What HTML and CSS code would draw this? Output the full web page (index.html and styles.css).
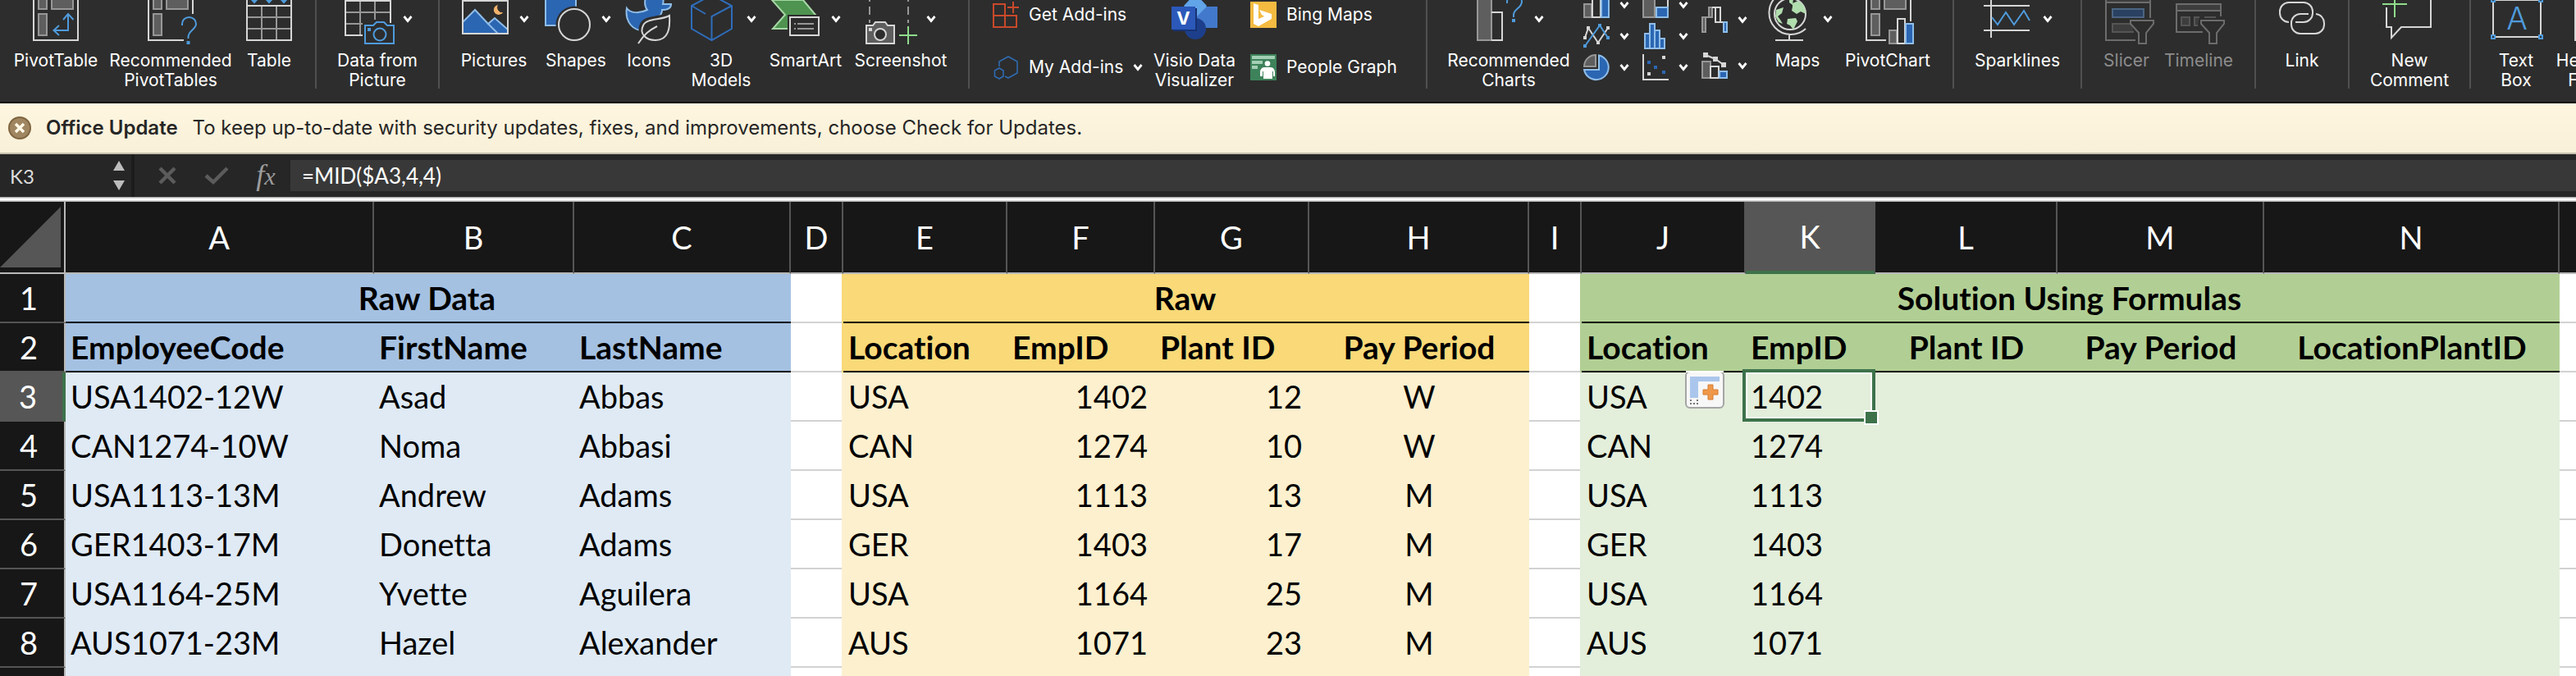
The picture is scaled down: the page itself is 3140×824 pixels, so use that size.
FILE: index.html
```html
<!DOCTYPE html>
<html lang="en">
<head>
<meta charset="utf-8">
<title>Workbook</title>
<link rel="stylesheet" href="styles.css">
</head>
<body>
<svg class="defs" aria-hidden="true">
  <symbol id="chev" viewBox="0 0 12 10"><path d="M1.5 2 L6 7.5 L10.5 2" fill="none" stroke="#fff" stroke-width="2.8"/></symbol>
</svg>
<div class="app">
  <div class="ribbon" role="toolbar" aria-label="Insert">
    <div class="group g-tables">
      <button class="tool"><span class="pic">
        <svg class="icon" viewBox="0 0 64 54"><path class="w" d="M5 -4V49H59V-4"/><path class="g" d="M11 -4V11H21V-4M27 -4V11H53V-4M11 17H21V43H11Z"/><path class="b" d="M47 18V37H30M41 24L47 17L53.5 24M36 31L29.500 37L36 43"/></svg></span>
        <span>PivotTable</span></button>
      <button class="tool"><span class="pic">
        <svg class="icon" viewBox="0 0 64 54"><path class="w" d="M59 17V-4M5 -4V49H48"/><path class="g" d="M11 -4V11H21V-4M27 -4V11H53V-4M11 17H21V43H11Z"/><path class="b" d="M46 31V29A8.500 8 0 0 1 63 29C63 36 53.500 37 53.500 45V47"/><path class="bf" d="M51.500 50h4v4h-4z"/></svg></span>
        <span>Recommended<br>PivotTables</span></button>
      <button class="tool"><span class="pic">
        <svg class="icon" viewBox="0 0 64 54"><path class="gl" d="M23 8V48M41 8V48M5 21H59M5 35H59"/><path class="w" d="M5 -4V49H59V-4M5 7H59"/><path class="bf" d="M9 -1H19L14 4.500ZM27 -1H37L32 4.500ZM45 -1H55L50 4.500Z"/></svg></span>
        <span>Table</span></button>
    </div>
    <div class="group g-single g-data">
      <button class="tool"><span class="pic">
        <svg class="icon" viewBox="0 0 64 54"><path class="gl" d="M22 2V42M40 2V24M4 15H58M4 29H25"/><path class="w" d="M59 28V1H4V43H25"/><path class="b" d="M28 31H38L42 27H51L55 31H63V53H28Z"/><circle class="b" cx="46" cy="42" r="7.500"/><path class="bf" d="M31 34h4v4h-4z"/></svg>
        <svg class="chev"><use href="#chev"/></svg></span>
        <span>Data from<br>Picture</span></button>
    </div>
    <div class="group g-illus">
      <button class="tool"><span class="pic">
        <svg class="icon" viewBox="0 0 64 54"><path class="bb" d="M5 27L20 12L36 29L44 22L60 36V41H5Z"/><path d="M36 29L48 41" fill="none" stroke="#8fbde8" stroke-width="2"/><path class="w" d="M5 1H60V41H5Z"/><path d="M48 6a6 6 0 1 0 6 9a6 6 0 0 1-6-9z" fill="#f2b26b"/></svg>
        <svg class="chev"><use href="#chev"/></svg></span>
        <span>Pictures</span></button>
      <button class="tool"><span class="pic">
        <svg class="icon" viewBox="0 0 64 54"><path class="bb" d="M6 -4H43V31H6Z"/><circle cx="41" cy="30" r="22.500" fill="#2d2d2d"/><circle class="w" cx="41" cy="30" r="19"/></svg>
        <svg class="chev"><use href="#chev"/></svg></span>
        <span>Shapes</span></button>
      <button class="tool"><span class="pic">
        <svg class="icon" viewBox="0 0 64 54"><path class="bb" d="M5 10C9 16 20 17 30 12C26 7 26 -2 31 -7H46C50 -4 50 2 49 5H59C59 10 54 12 48 12C48 16 46 19 43 21C30 22 23 30 21 37C8 34 3 22 5 10Z"/><path d="M57 18C58 34 56 49 40 49C28 49 20 41 24 31C28 21 44 25 57 18Z" fill="#2d2d2d" stroke="#2d2d2d" stroke-width="7"/><path class="w" d="M57 19C58 34 56 49 40 49C28 49 20 41 25 31C29 22 46 25 57 19ZM42 32C32 37 26 42 19 53"/></svg></span>
        <span>Icons</span></button>
      <button class="tool"><span class="pic">
        <svg class="icon" viewBox="0 0 64 54"><path d="M7 7L31.500 -6L56 7V35L31.500 49L7 35ZM7 7L24 17M56 7L31.500 20V49" fill="none" stroke="#2f6dbb" stroke-width="2"/></svg>
        <svg class="chev"><use href="#chev"/></svg></span>
        <span>3D<br>Models</span></button>
      <button class="tool"><span class="pic">
        <svg class="icon" viewBox="0 0 64 54"><path d="M2 0H40L55 18L42 35H3L18 18Z" fill="#4e9350" stroke="#a6d8a5" stroke-width="2"/><path d="M21 18H62V47H21Z" fill="#2d2d2d"/><path class="w" d="M24 21H59V43H24Z"/><path class="gl" d="M29 29h2M33 29H53M29 35h2M33 35H53"/></svg>
        <svg class="chev"><use href="#chev"/></svg></span>
        <span>SmartArt</span></button>
      <button class="tool"><span class="pic">
        <svg class="icon" viewBox="0 0 64 54"><path class="gl" d="M5 0V2M5 8V18M5 24V28M52 0V2M52 8V18M52 24V28"/><path d="M1 31H9L12 27H24L27 31H35V53H1Z" fill="#5e5e5e" stroke="#d6d6d6" stroke-width="2"/><circle cx="18" cy="42" r="7" fill="#2d2d2d" stroke="#d6d6d6" stroke-width="2"/><path d="M4 34h4v4h-4z" fill="#d6d6d6"/><path class="gr" d="M52 32V54M41 43H63"/></svg>
        <svg class="chev"><use href="#chev"/></svg></span>
        <span>Screenshot</span></button>
    </div>
    <div class="group g-addins">
      <div class="stack">
        <button class="row"><svg class="small" viewBox="0 0 32 32"><path d="M1 3H15V17H29V31H1ZM1 17H15V31M25 0V14M18 7H32" fill="none" stroke="#c8492a" stroke-width="2"/></svg><span>Get Add-ins</span></button>
        <button class="row"><svg class="small" viewBox="0 0 32 32"><path d="M8 15V9L19 3L30 9V23L19 29L15 27M8 17L13 20V27L8 30L2.500 27V20Z" fill="none" stroke="#2e6bb0" stroke-width="1.600"/></svg><span>My Add-ins</span><svg class="chev"><use href="#chev"/></svg></button>
      </div>
      <button class="tool"><span class="pic">
        <svg class="icon" viewBox="0 0 64 54"><path d="M33 -8L47 7L33 22L19 7Z" fill="#61a4e8"/><path d="M33 8H60V34H33Z" fill="#4379cc"/><path d="M33 22L47 8H33Z" fill="#61a4e8"/><circle cx="33" cy="35" r="13" fill="#1d3f8b"/><path d="M6 10H35V38H6Z" fill="#173271"/><path d="M4 8H33V36H4Z" fill="#2b58b9"/><text x="18.500" y="30" text-anchor="middle" class="visio">V</text></svg></span>
        <span>Visio Data<br>Visualizer</span></button>
      <div class="stack">
        <button class="row"><svg class="small" viewBox="0 0 32 32"><path d="M0 0H32V32H0Z" fill="#f4bb41"/><path d="M4 2L10 4V21L17 18L14 16L11 10L26 15V21L10 30L4 27Z" fill="#fff"/></svg><span>Bing Maps</span></button>
        <button class="row"><svg class="small" viewBox="0 0 32 32"><path d="M0 0H32V32H0Z" fill="#3d825a"/><path d="M2 2H30V6H2ZM2 8H15V12H2ZM2 14H9V18H2Z" fill="#a3cfb4"/><circle cx="21" cy="11.500" r="3.300" fill="#fff"/><path d="M17 16H25C28 16 30 19 30 22V27H28V21H27V30H16V21H15V27H12V22C12 19 14 16 17 16Z" fill="#fff"/></svg><span>People Graph</span></button>
      </div>
    </div>
    <div class="group g-charts">
      <button class="tool"><span class="pic">
        <svg class="icon" viewBox="0 0 64 54"><path class="g" d="M5 -4H22V49H5Z"/><path class="w" d="M22 15H35V49H22"/><path class="b" d="M41 4V2A9 9 0 0 1 59 2C59 10 49 11 49 18V21"/><path class="bf" d="M47 23h4v4h-4z"/></svg>
        <svg class="chev"><use href="#chev"/></svg></span>
        <span>Recommended<br>Charts</span></button>
      <div class="minis">
        <div class="mini-col">
          <button class="mini" aria-label="Column"><svg class="small" viewBox="0 0 32 32"><path class="g" d="M1 15H10V31H1Z"/><path class="w" d="M11 0H21V31H11Z"/><path class="bb" d="M22 0H31V31H22Z"/></svg><svg class="chev"><use href="#chev"/></svg></button>
          <button class="mini" aria-label="Line"><svg class="small" viewBox="0 0 32 32"><path class="w" d="M2 18L6 6L18 24L30 6"/><path d="M0 16h4v4h-4zM4 4h4v4h-4zM16 22h4v4h-4zM28 4h4v4h-4z" fill="#d6d6d6"/><path class="b" d="M2 28L20 3L30 18"/><path class="bf" d="M0 26h4v4h-4zM18 1h4v4h-4zM28 16h4v4h-4z"/></svg><svg class="chev"><use href="#chev"/></svg></button>
          <button class="mini" aria-label="Pie"><svg class="small" viewBox="0 0 32 32"><path class="g" d="M15 1V15H1A14 14 0 0 1 15 1Z"/><path class="bb" d="M19 1.500A15 15 0 1 1 1 19H19Z"/></svg><svg class="chev"><use href="#chev"/></svg></button>
        </div>
        <div class="mini-col">
          <button class="mini" aria-label="Hierarchy"><svg class="small" viewBox="0 0 32 32"><path class="w" d="M16 0H31V31"/><path class="g" d="M1 0H15V31H1Z"/><path class="bb" d="M17 19H31V31H17Z"/></svg><svg class="chev"><use href="#chev"/></svg></button>
          <button class="mini" aria-label="Statistical"><svg class="small" viewBox="0 0 32 32"><path class="bb" d="M3 13H9V31H3ZM9 1H15V31H9ZM15 9H21V31H15ZM21 19H27V31H21Z"/></svg><svg class="chev"><use href="#chev"/></svg></button>
          <button class="mini" aria-label="Scatter"><svg class="small" viewBox="0 0 32 32"><path class="w" d="M1 0V31H32"/><path d="M6 8h4v4h-4zM14 14h4v4h-4zM24 20h4v4h-4z" fill="#2b66b3"/><path d="M24 2h4v4h-4zM6 22h4v4h-4z" fill="#d6d6d6"/></svg><svg class="chev"><use href="#chev"/></svg></button>
        </div>
        <div class="mini-col pair">
          <button class="mini" aria-label="Waterfall"><svg class="small" viewBox="0 0 32 32"><path class="g" d="M1 13H5V31H1ZM9 1H13V13H9ZM5 13H9"/><path class="w" d="M13 1H23V19H17V1M23 19H27"/><path class="bb" d="M27 19H31V31H27Z"/></svg><svg class="chev"><use href="#chev"/></svg></button>
          <button class="mini" aria-label="Combo"><svg class="small" viewBox="0 0 32 32"><path class="g" d="M1 11H11V31H1Z"/><path class="w" d="M11 17H21V31H11Z"/><path class="bb" d="M22 23H31V31H22Z"/><path class="w" d="M5 3L17 8L27 15"/><path d="M2 0h6v6h-6zM14 5h6v6h-6zM24 12h6v6h-6z" fill="#d6d6d6"/></svg><svg class="chev"><use href="#chev"/></svg></button>
        </div>
      </div>
      <button class="tool"><span class="pic">
        <svg class="icon" viewBox="0 0 64 54"><circle class="w" cx="34" cy="17" r="19"/><path class="w" d="M17 -4A26 26 0 0 0 53 35M33 43V49M16 49H50"/><path d="M17 12L26 9L24 16L19 20L22 24L25 29L20 27L16 20ZM37 4L44 1L51 7L53 17L47 14L42 17L36 13L37 8ZM31 23L41 22L43 26L38 36L34 31L30 29ZM33 -2H38L37 6L33 3Z" fill="#b1deae"/></svg>
        <svg class="chev"><use href="#chev"/></svg></span>
        <span>Maps</span></button>
      <button class="tool"><span class="pic">
        <svg class="icon" viewBox="0 0 64 54"><path class="w" d="M60 26V-4M6 -4V49H30"/><path class="g" d="M12 -4V11H22V-4M28 -4V11H54V-4M12 17H22V43H12ZM34 37H43V53H34Z"/><path class="w" d="M44 23H53V53H44Z"/><path class="bb" d="M54 29H63V53H54Z"/></svg></span>
        <span>PivotChart</span></button>
    </div>
    <div class="group g-single g-spark">
      <button class="tool"><span class="pic">
        <svg class="icon" viewBox="0 0 64 54"><path class="w" d="M2 7H58M2 37H58M11 0V46"/><path class="b" d="M12 21L19 30L29 15L39 30L51 13L58 25"/></svg>
        <svg class="chev"><use href="#chev"/></svg></span>
        <span>Sparklines</span></button>
    </div>
    <div class="group g-filters">
      <button class="tool" disabled><span class="pic">
        <svg class="icon" viewBox="0 0 64 54"><path d="M7 -4H61V3H7Z" fill="#3d3d3d"/><path class="d" d="M61 22V-4M7 -4V49H43M7 3H61"/><path d="M15 11H53V21H15Z" fill="#2a4161" stroke="#4b6482" stroke-width="2"/><path d="M41 39H15V29H38" fill="#3d3d3d" stroke="#555" stroke-width="2"/><path class="d" d="M37 25H65V29L56 40V53H47V40L37 29Z"/></svg></span>
        <span>Slicer</span></button>
      <button class="tool" disabled><span class="pic">
        <svg class="icon" viewBox="0 0 64 54"><path d="M5 5H59V13H5Z" fill="#3d3d3d"/><path class="d" d="M59 20V5H5V39H37M5 13H59"/><path d="M11 21H21V31H11ZM31 31H27V21H33M39 21H53" fill="#3d3d3d" stroke="#555" stroke-width="2"/><path class="d" d="M35 25H63V29L54 40V53H45V40L35 29Z"/></svg></span>
        <span>Timeline</span></button>
    </div>
    <div class="group g-single g-link">
      <button class="tool"><span class="pic">
        <svg class="icon" viewBox="0 0 64 54"><path class="w" d="M16 27A11 11 0 0 1 5 16V14A11 11 0 0 1 16 3H34A11 11 0 0 1 45 14V16A11 11 0 0 1 34 27H24"/><path class="w" d="M49 17A11 11 0 0 1 59 28V30A11 11 0 0 1 48 41H30A11 11 0 0 1 19 30V28A11 11 0 0 1 30 17H40"/></svg></span>
        <span>Link</span></button>
    </div>
    <div class="group g-single g-comment">
      <button class="tool"><span class="pic">
        <svg class="icon" viewBox="0 0 64 54"><path class="w" d="M4 9V33H10V46L22 33H58V-4"/><path class="gr" d="M14 -6V21M-1 5H29"/></svg></span>
        <span>New<br>Comment</span></button>
    </div>
    <div class="group g-text">
      <button class="tool"><span class="pic">
        <svg class="icon" viewBox="0 0 64 54"><path class="w" d="M4 0H62V45H4Z"/><path d="M2 -2h4v4h-4zM60 -2h4v4h-4zM2 43h4v4h-4zM60 43h4v4h-4z" fill="#2d2d2d" stroke="#4f9bdc" stroke-width="2"/><text x="33" y="36" text-anchor="middle" class="glyph">A</text></svg></span>
        <span>Text<br>Box</span></button>
      <button class="tool"><span class="pic">
        <svg class="icon" viewBox="0 0 64 54"><path class="w" d="M9 -4V49H55V-4"/></svg></span>
        <span>Header &amp;<br>Footer</span></button>
    </div>
  </div>

  <div class="notice" role="status">
    <button class="dismiss" aria-label="Dismiss"><svg viewBox="0 0 28 28"><circle cx="14" cy="14" r="13" fill="#a08660" stroke="#7f6540" stroke-width="2"/><path d="M9 9L19 19M19 9L9 19" stroke="#fff9e8" stroke-width="3.500"/></svg></button>
    <strong>Office Update</strong>
    <span>To keep up-to-date with security updates, fixes, and improvements, choose Check for Updates.</span>
  </div>

  <div class="formula-bar">
    <div class="name-box">
      <input class="cell-name" aria-label="Name box" value="K3">
      <svg class="stepper" viewBox="0 0 14 36"><path d="M7 0L14 12H0ZM0 24H14L7 36Z" fill="#bdbdbd"/></svg>
    </div>
    <button class="action" aria-label="Cancel"><svg viewBox="0 0 28 24"><path d="M5 3L23 21M23 3L5 21" fill="none" stroke="#5b5b5b" stroke-width="4.500"/></svg></button>
    <button class="action" aria-label="Enter"><svg viewBox="0 0 28 24"><path d="M1 12L10 20L27 3" fill="none" stroke="#5b5b5b" stroke-width="4.500"/></svg></button>
    <button class="action fx" aria-label="Insert function"><i>f<small>x</small></i></button>
    <input class="formula" aria-label="Formula" value="=MID($A3,4,4)">
  </div>

  <table class="sheet">
    <colgroup><col class="c-head"><col class="c-a"><col class="c-b"><col class="c-c"><col class="c-gap"><col class="c-e"><col class="c-f"><col class="c-g"><col class="c-h"><col class="c-gap"><col class="c-j"><col class="c-k"><col class="c-l"><col class="c-m"><col class="c-n"><col></colgroup>
    <thead><tr><th class="corner"><svg viewBox="0 0 74 74"><path d="M74 0V74H0Z" fill="#565656"/></svg></th><th>A</th><th>B</th><th>C</th><th>D</th><th>E</th><th>F</th><th>G</th><th>H</th><th>I</th><th>J</th><th class="current">K</th><th>L</th><th>M</th><th>N</th><th></th></tr></thead>
    <tbody>
      <tr class="title"><th>1</th><td class="blue" colspan="3">Raw Data</td><td></td><td class="yellow" colspan="4">Raw</td><td></td><td class="green" colspan="5">Solution Using Formulas</td><td></td></tr>
      <tr class="heads"><th>2</th><td class="blue">EmployeeCode</td><td class="blue">FirstName</td><td class="blue">LastName</td><td></td><td class="yellow">Location</td><td class="yellow">EmpID</td><td class="yellow">Plant ID</td><td class="yellow mid">Pay Period</td><td></td><td class="green">Location</td><td class="green">EmpID</td><td class="green mid">Plant ID</td><td class="green mid">Pay Period</td><td class="green mid">LocationPlantID</td><td></td></tr>
      <tr><th class="current">3</th><td class="blue">USA1402-12W</td><td class="blue">Asad</td><td class="blue">Abbas</td><td></td><td class="yellow">USA</td><td class="yellow num">1402</td><td class="yellow num">12</td><td class="yellow mid">W</td><td></td><td class="green anchor">USA<button class="fill-options" aria-label="Auto fill options"><svg viewBox="0 0 48 46"><rect x="1" y="1" width="46" height="44" rx="5" fill="#f7f7f7" stroke="#a5a5a5" stroke-width="2"/><path d="M1 1H47" stroke="#fff" stroke-width="2"/><path d="M6 7H42V13H16V33H6Z" fill="#abc6ec"/><path d="M28 17H34V23H40V29H34V35H28V29H22V23H28Z" fill="#f0984a" stroke="#d57c2f" stroke-width="1"/><path d="M6 36h2M14 36h2M6 40h2M10 40h2M14 40h2" stroke="#777" stroke-width="2"/></svg></button></td><td class="green anchor">1402<span class="selection"></span></td><td class="green"></td><td class="green"></td><td class="green"></td><td></td></tr>
      <tr><th>4</th><td class="blue">CAN1274-10W</td><td class="blue">Noma</td><td class="blue">Abbasi</td><td></td><td class="yellow">CAN</td><td class="yellow num">1274</td><td class="yellow num">10</td><td class="yellow mid">W</td><td></td><td class="green">CAN</td><td class="green">1274</td><td class="green"></td><td class="green"></td><td class="green"></td><td></td></tr>
      <tr><th>5</th><td class="blue">USA1113-13M</td><td class="blue">Andrew</td><td class="blue">Adams</td><td></td><td class="yellow">USA</td><td class="yellow num">1113</td><td class="yellow num">13</td><td class="yellow mid">M</td><td></td><td class="green">USA</td><td class="green">1113</td><td class="green"></td><td class="green"></td><td class="green"></td><td></td></tr>
      <tr><th>6</th><td class="blue">GER1403-17M</td><td class="blue">Donetta</td><td class="blue">Adams</td><td></td><td class="yellow">GER</td><td class="yellow num">1403</td><td class="yellow num">17</td><td class="yellow mid">M</td><td></td><td class="green">GER</td><td class="green">1403</td><td class="green"></td><td class="green"></td><td class="green"></td><td></td></tr>
      <tr><th>7</th><td class="blue">USA1164-25M</td><td class="blue">Yvette</td><td class="blue">Aguilera</td><td></td><td class="yellow">USA</td><td class="yellow num">1164</td><td class="yellow num">25</td><td class="yellow mid">M</td><td></td><td class="green">USA</td><td class="green">1164</td><td class="green"></td><td class="green"></td><td class="green"></td><td></td></tr>
      <tr><th>8</th><td class="blue">AUS1071-23M</td><td class="blue">Hazel</td><td class="blue">Alexander</td><td></td><td class="yellow">AUS</td><td class="yellow num">1071</td><td class="yellow num">23</td><td class="yellow mid">M</td><td></td><td class="green">AUS</td><td class="green">1071</td><td class="green"></td><td class="green"></td><td class="green"></td><td></td></tr>
      <tr><th></th><td class="blue"></td><td class="blue"></td><td class="blue"></td><td></td><td class="yellow"></td><td class="yellow"></td><td class="yellow"></td><td class="yellow"></td><td></td><td class="green"></td><td class="green"></td><td class="green"></td><td class="green"></td><td class="green"></td><td></td></tr>
    </tbody>
  </table>
</div>
</body>
</html>
```
FILE: styles.css
```css
* { box-sizing: border-box; }
body { margin: 0; background: #fff; font-family: Inter, "Liberation Sans", sans-serif; }
button, input { font: inherit; color: inherit; background: none; border: 0; padding: 0; margin: 0; }
svg { display: block; overflow: visible; }
.defs { position: absolute; width: 0; height: 0; }
.app { height: 100vh; overflow: hidden; }

/* Ribbon */
.ribbon { display: flex; height: 126px; overflow: hidden; background: #2d2d2d; border-bottom: 2px solid #000; color: #fff; font-size: 21px; line-height: 24px; }
.group { position: relative; display: grid; flex: none; height: 108px; border-right: 2px solid #505050; align-items: start; }
.g-tables { grid-template-columns: 136px 144px 96px; width: 386px; }
.g-single { grid-template-columns: 1fr; }
.g-data { width: 150px; }
.g-illus { grid-template-columns: 100px 100px 78px 98px 108px 124px; padding-left: 16px; width: 646px; }
.g-addins { grid-template-columns: 178px 136px 1fr; padding-left: 28px; width: 558px; }
.g-charts { grid-template-columns: 166px 220px 98px 122px; padding-left: 16px; width: 642px; }
.g-spark { width: 156px; }
.g-filters { grid-template-columns: 88px 88px; padding-left: 10px; width: 212px; }
.g-link { width: 114px; }
.g-comment { width: 148px; }
.g-text { grid-template-columns: 98px 92px; padding-left: 6px; border-right: 0; }

.tool { display: flex; flex-direction: column; align-items: center; gap: 8px; white-space: nowrap; text-align: center; }
.tool:disabled { color: #8c8c8c; }
.pic { display: flex; gap: 10px; align-items: flex-start; }
.icon { width: 64px; height: 54px; }
.chev { flex: none; width: 12px; height: 10px; }
.pic .chev { margin-top: 18px; }
.stack { display: grid; gap: 32px; padding-top: 2px; justify-items: start; }
.row { display: flex; align-items: center; gap: 12px; height: 32px; white-space: nowrap; }
.small { flex: none; width: 32px; height: 32px; }
.minis { display: flex; gap: 16px; padding-left: 8px; }
.mini-col { display: grid; gap: 6px; margin-top: -10px; align-content: start; }
.mini-col.pair { gap: 24px; margin-top: 8px; }
.mini { display: flex; align-items: center; gap: 12px; }

.w { fill: none; stroke: #d6d6d6; stroke-width: 2; }
.g { fill: #5e5e5e; stroke: #979797; stroke-width: 2; }
.gl { fill: none; stroke: #979797; stroke-width: 2; }
.b { fill: none; stroke: #4f9bdc; stroke-width: 2; }
.bf { fill: #4f9bdc; }
.bb { fill: #2b66b3; stroke: #8fbde8; stroke-width: 2; }
.gr { fill: none; stroke: #8fdc8c; stroke-width: 2; }
.d { fill: none; stroke: #6c6c6c; stroke-width: 2; }
.visio { font: 700 22px Inter, sans-serif; fill: #fff; }
.glyph { font: 300 38px Inter, sans-serif; fill: #4f9bdc; }

/* Update notice */
.notice { display: flex; align-items: center; height: 62px; padding: 0 10px; background: linear-gradient(#fff6e0, #f8f0d9); border-bottom: 2px solid #c5bfac; color: #262626; font-size: 24px; line-height: 28px; white-space: nowrap; }
.notice strong { margin: 0 18px; font-weight: 600; }
.dismiss svg { width: 28px; height: 28px; }

/* Formula bar */
.formula-bar { display: flex; align-items: center; height: 58px; padding-bottom: 6px; background: linear-gradient(#999, #fff 40%, #fff 60%, #999) bottom / 100% 6px no-repeat #262626; font-family: Lato, sans-serif; }
.name-box { display: flex; align-items: center; justify-content: space-between; width: 164px; height: 52px; padding: 0 8px 0 12px; border-right: 4px solid #1c1c1c; color: #dcdcdc; font-size: 24px; }
.cell-name { width: 100px; }
.stepper { width: 14px; height: 36px; }
.action { width: 60px; margin-left: 10px; display: flex; justify-content: center; }
.action + .action { margin-left: 0; }
.action svg { width: 28px; height: 24px; }
.fx { color: #9c9c9c; font-family: "Liberation Serif", serif; font-size: 36px; line-height: 40px; }
.fx small { font-size: 30px; }
.formula { flex: 1; height: 38px; padding: 0 14px; background: #383838; color: #fff; font-size: 26px; }

/* Grid */
.sheet { width: 100%; table-layout: fixed; border-collapse: separate; border-spacing: 0; font-family: Lato, sans-serif; font-size: 38px; line-height: 44px; font-variant-ligatures: none; color: #000; }
.c-head { width: 80px; } .c-a { width: 376px; } .c-b { width: 244px; } .c-c { width: 264px; } .c-gap { width: 64px; }
.c-e { width: 200px; } .c-f { width: 180px; } .c-g { width: 188px; } .c-h { width: 268px; }
.c-j { width: 200px; } .c-k { width: 158px; } .c-l { width: 222px; } .c-m { width: 252px; } .c-n { width: 360px; }
.sheet th { padding: 0; font-weight: 400; background: #171717; color: #fff; }
.sheet td { height: 60px; padding: 0 9px 0 6px; border-bottom: 2px solid #d2d2d2; white-space: nowrap; }
thead th { height: 88px; border-right: 2px solid #555; border-bottom: 2px solid #b8b8b8; }
thead th:last-child { border-right: 0; }
.sheet thead .corner { border-right-color: #b8b8b8; padding-right: 4px; }
.corner svg { width: 74px; height: 74px; }
.sheet thead .current { background: #565656; border-bottom: 4px solid #3d724a; border-right-color: #565656; }
.sheet tbody th { border-right: 2px solid #b8b8b8; border-bottom: 2px solid #555; padding-right: 8px; }
.sheet tbody .current { background: #565656; border-right: 4px solid #3d724a; border-bottom-color: #565656; }
.blue { --fill: #dfeaf5; --line: #dfeaf5; }
.yellow { --fill: #fcf0cf; --line: #fcf0cf; }
.green { --fill: #e3eedb; --line: #e3eedb; }
.title td, .heads td { --line: #000; font-weight: 700; font-size: 39px; }
.title .blue, .heads .blue { --fill: #a4c1e2; }
.title .yellow, .heads .yellow { --fill: #f9d978; }
.title .green, .heads .green { --fill: #b1cf94; }
.sheet td[class] { background: var(--fill); border-bottom-color: var(--line); }
td:not([class]) + td[class] { box-shadow: -2px 0 var(--fill); }
.title td { text-align: center; }
.sheet .num { text-align: right; }
.sheet .mid { text-align: center; padding: 0; }
.anchor { position: relative; }
.selection { position: absolute; inset: -4px 0 -2px -4px; border: 4px solid #3d724a; box-shadow: inset 0 0 0 2px #fff; }
.selection::after { content: ""; position: absolute; right: -8px; bottom: -8px; width: 14px; height: 14px; background: #3d724a; border: 2px solid #fff; }
.fill-options { position: absolute; top: -2px; right: 26px; }
.fill-options svg { width: 48px; height: 46px; }
```
